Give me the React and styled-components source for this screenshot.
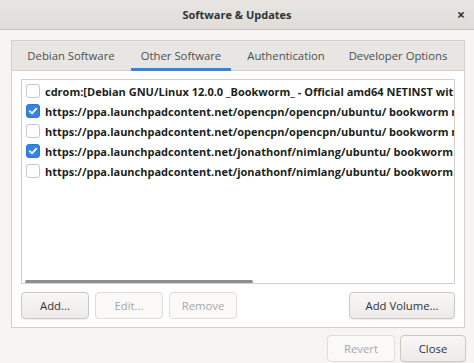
import styled, { createGlobalStyle } from "styled-components";

const GlobalStyle = createGlobalStyle`
  html, body { margin: 0; padding: 0; }
  body {
    width: 474px;
    height: 363px;
    overflow: hidden;
    background: #f6f5f4;
    font-family: "Open Sans", "Noto Sans", sans-serif;
    color: #2e3436;
  }
`;

const Window = styled.div`
  width: 474px;
  height: 363px;
  display: flex;
  flex-direction: column;
  background: #f6f5f4;
`;

const TitleBar = styled.header`
  height: 29px;
  flex: none;
  position: relative;
  display: flex;
  align-items: center;
  justify-content: center;
  background: linear-gradient(#e8e6e3, #dfdcd8);
  border-bottom: 1px solid #c9c4bf;
  font-weight: 700;
  font-size: 11px;
  color: #2e3436;
`;

const CloseX = styled.span`
  position: absolute;
  right: 9px;
  top: 5px;
  font-size: 14px;
  font-weight: 700;
  color: #2e3436;
`;

const Body = styled.div`
  flex: 1;
  display: flex;
  flex-direction: column;
  padding: 10px 8px 0 11px;
`;

const Notebook = styled.div`
  border: 1px solid #d5d0cc;
  display: flex;
  flex-direction: column;
  height: 288px;
  width: 454px;
  box-sizing: border-box;
`;

const Tabs = styled.div`
  height: 29px;
  flex: none;
  display: flex;
  background: #e8e6e3;
  border-bottom: 1px solid #d5d0cc;
  padding-left: 6px;
`;

const Tab = styled.div`
  position: relative;
  width: ${(p) => p.$w}px;
  flex: none;
  display: flex;
  align-items: center;
  justify-content: center;
  white-space: nowrap;
  font-size: 11.3px;
  color: #4a4f51;
  &::after {
    content: "";
    display: ${(p) => (p.$active ? "block" : "none")};
    position: absolute;
    left: 7px;
    right: 7px;
    bottom: -1px;
    height: 3px;
    background: #3584e4;
  }
`;

const Page = styled.div`
  flex: 1;
  background: #ffffff;
  padding: 8px 9px 0 9px;
  display: flex;
  flex-direction: column;
`;

const ListBox = styled.div`
  position: relative;
  height: 205px;
  border: 1px solid #d5d0cc;
  box-sizing: border-box;
  padding-top: 1px;
  overflow: hidden;
`;

const Row = styled.div`
  height: 20px;
  display: flex;
  align-items: center;
  padding-left: 4px;
  gap: 5px;
  white-space: nowrap;
  font-weight: 700;
  font-size: 11px;
  color: #1c1f20;
`;

const Check = styled.span`
  width: 14px;
  height: 14px;
  flex: none;
  box-sizing: border-box;
  border-radius: 3px;
  border: 1px solid ${(p) => (p.$on ? "#2a76d6" : "#cdc7c2")};
  background: ${(p) => (p.$on ? "#3584e4" : "#ffffff")};
  display: flex;
  align-items: center;
  justify-content: center;
`;

const Scrollbar = styled.div`
  position: absolute;
  left: 3px;
  bottom: 0;
  width: 228px;
  height: 3px;
  border-radius: 2px;
  background: #8e8e8e;
`;

const ButtonRow = styled.div`
  display: flex;
  gap: 6px;
  margin-top: 8px;
`;

const Button = styled.button`
  height: 27px;
  min-width: ${(p) => p.$w || 68}px;
  padding: 0 10px;
  box-sizing: border-box;
  border-radius: 4px;
  border: 1px solid ${(p) => (p.disabled ? "#e0dcd8" : "#cdc7c2")};
  background: ${(p) =>
    p.disabled ? "#faf9f8" : "linear-gradient(#f8f7f6, #edebe9)"};
  box-shadow: ${(p) => (p.disabled ? "none" : "0 1px 1px rgba(0,0,0,0.07)")};
  font-family: "Open Sans", "Noto Sans", sans-serif;
  font-size: 11.3px;
  color: ${(p) => (p.disabled ? "#a6a8a9" : "#2e3436")};
`;

const Spacer = styled.div`
  flex: 1;
`;

const Footer = styled.div`
  display: flex;
  justify-content: flex-end;
  gap: 5px;
  margin-top: 7px;
`;

const CheckMark = () => (
  <svg width="10" height="10" viewBox="0 0 10 10">
    <path
      d="M1.8 5.2 L4 7.3 L8.3 2.6"
      fill="none"
      stroke="#fff"
      strokeWidth="1.8"
      strokeLinecap="round"
      strokeLinejoin="round"
    />
  </svg>
);

const sources = [
  { on: false, text: "cdrom:[Debian GNU/Linux 12.0.0 _Bookworm_ - Official amd64 NETINST with firmware]" },
  { on: true, text: "https://ppa.launchpadcontent.net/opencpn/opencpn/ubuntu/ bookworm main" },
  { on: false, text: "https://ppa.launchpadcontent.net/opencpn/opencpn/ubuntu/ bookworm main (Source Code)" },
  { on: true, text: "https://ppa.launchpadcontent.net/jonathonf/nimlang/ubuntu/ bookworm main" },
  { on: false, text: "https://ppa.launchpadcontent.net/jonathonf/nimlang/ubuntu/ bookworm main (Source Code)" },
];

export default function App() {
  return (
    <Window>
      <GlobalStyle />
      <TitleBar>
        Software &amp; Updates
        <CloseX>×</CloseX>
      </TitleBar>
      <Body>
        <Notebook>
          <Tabs>
            <Tab $w={106}>Debian Software</Tab>
            <Tab $w={114} $active>Other Software</Tab>
            <Tab $w={96}>Authentication</Tab>
            <Tab $w={128}>Developer Options</Tab>
          </Tabs>
          <Page>
            <ListBox>
              {sources.map((s, i) => (
                <Row key={i}>
                  <Check $on={s.on}>{s.on && <CheckMark />}</Check>
                  {s.text}
                </Row>
              ))}
              <Scrollbar />
            </ListBox>
            <ButtonRow>
              <Button>Add...</Button>
              <Button disabled>Edit...</Button>
              <Button disabled>Remove</Button>
              <Spacer />
              <Button $w={106}>Add Volume...</Button>
            </ButtonRow>
          </Page>
        </Notebook>
        <Footer>
          <Button disabled>Revert</Button>
          <Button $w={66}>Close</Button>
        </Footer>
      </Body>
    </Window>
  );
}
